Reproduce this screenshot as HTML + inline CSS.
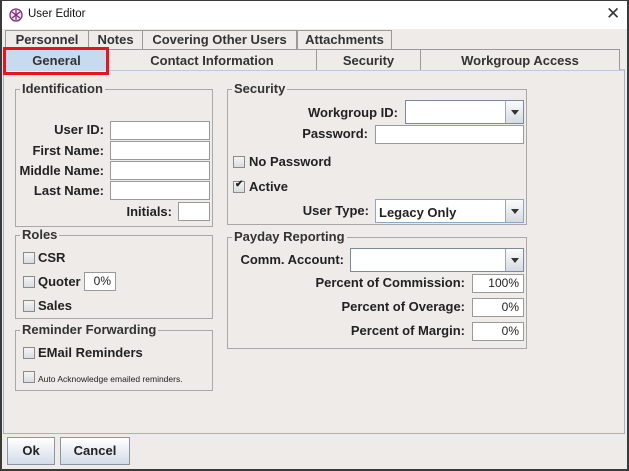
<!DOCTYPE html>
<html><head><style>
*{margin:0;padding:0;box-sizing:border-box}
body{width:629px;height:471px;position:relative;background:#eeebe9;font-family:"Liberation Sans",Arial,sans-serif;font-size:13px;font-weight:bold;color:#222;overflow:hidden}
.a{position:absolute}
.win{left:0;top:0;width:629px;height:471px;border:2px solid #3a3a3a;border-top:1px solid #3a3a3a}
.title{left:1px;top:1px;width:626px;height:28px;background:#fff}
.tab{position:absolute;height:19px;border:1px solid #9a9a9a;border-bottom:none;background:#eeebe9;text-align:center;line-height:18px;font-size:13px;color:#333}
.grp{position:absolute;border:1px solid #a8a8a8}
.grp>span{position:absolute;top:-8px;left:4px;background:#eeebe9;padding:0 2px;font-size:13px;color:#333;line-height:14px}
.lbl{position:absolute;text-align:right;line-height:14px;color:#222}
.fld{position:absolute;background:#fff;border:1px solid #9a9a9a;height:19px;font-weight:normal;text-align:right;padding-right:4px;line-height:17px;font-size:12px}
.cb{position:absolute;width:12px;height:12px;border:1px solid #8a8a8a;background:linear-gradient(#f4f4f4,#d8dce0)}
.cbl{position:absolute;line-height:14px;font-size:13px}
.combo{position:absolute;background:#fff;border:1px solid #7a8a9c;height:24px}
.combo .arr{position:absolute;right:0;top:0;width:18px;height:22px;border-left:1px solid #9aa;background:linear-gradient(#fbfbfb,#d6dbe2)}
.combo .arr:after{content:"";position:absolute;left:5px;top:9px;border-left:4px solid transparent;border-right:4px solid transparent;border-top:5px solid #333}
.btn{position:absolute;top:437px;height:28px;border:1px solid #8a96a6;background:linear-gradient(#ffffff,#d3dce8);text-align:center;line-height:26px;font-size:13px}
</style></head><body>
<div class="a title"></div>
<div class="a win"></div>
<svg class="a" style="left:9px;top:8px" width="14" height="14" viewBox="0 0 14 14"><circle cx="7" cy="7" r="6" fill="#efe3f0" stroke="#7a2a7c" stroke-width="1.3"/><path d="M3 4l8 6M11 4l-8 6M7 2v10" stroke="#7a2a7c" stroke-width="1.2"/></svg>
<div class="a" style="left:28px;top:8px;font-weight:normal;font-size:11.5px;color:#111">User Editor</div>
<div class="a" style="left:606px;top:4px;font-weight:normal;font-size:17px;color:#333">✕</div>

<div class="tab" style="left:5px;top:30px;width:84px">Personnel</div>
<div class="tab" style="left:88px;top:30px;width:55px">Notes</div>
<div class="tab" style="left:142px;top:30px;width:155px">Covering Other Users</div>
<div class="tab" style="left:297px;top:30px;width:95px">Attachments</div>

<div class="a" style="left:3px;top:69px;width:622px;height:365px;border:1px solid #9fb3cc;border-top:2px solid #b8cbe0"></div>
<div class="tab" style="left:5px;top:49px;width:103px;height:22px;background:#c8daf0;line-height:21px">General</div>
<div class="tab" style="left:107px;top:49px;width:210px;height:21px;line-height:21px">Contact Information</div>
<div class="tab" style="left:316px;top:49px;width:105px;height:21px;line-height:21px">Security</div>
<div class="tab" style="left:420px;top:49px;width:200px;height:21px;line-height:21px">Workgroup Access</div>
<div class="a" style="left:3px;top:47px;width:106px;height:28px;border:3px solid #e8141a"></div>

<div class="grp" style="left:15px;top:89px;width:198px;height:138px"><span>Identification</span></div>
<div class="lbl" style="left:6px;top:123px;width:98px">User ID:</div>
<div class="fld" style="left:110px;top:121px;width:100px"></div>
<div class="lbl" style="left:6px;top:144px;width:98px">First Name:</div>
<div class="fld" style="left:110px;top:141px;width:100px"></div>
<div class="lbl" style="left:6px;top:164px;width:98px">Middle Name:</div>
<div class="fld" style="left:110px;top:161px;width:100px"></div>
<div class="lbl" style="left:6px;top:184px;width:98px">Last Name:</div>
<div class="fld" style="left:110px;top:181px;width:100px"></div>
<div class="lbl" style="left:100px;top:205px;width:72px">Initials:</div>
<div class="fld" style="left:178px;top:202px;width:32px"></div>

<div class="grp" style="left:15px;top:235px;width:198px;height:84px"><span>Roles</span></div>
<div class="cb" style="left:23px;top:252px"></div><div class="cbl" style="left:38px;top:251px">CSR</div>
<div class="cb" style="left:23px;top:276px"></div><div class="cbl" style="left:38px;top:275px">Quoter</div>
<div class="fld" style="left:84px;top:272px;width:32px">0%</div>
<div class="cb" style="left:23px;top:300px"></div><div class="cbl" style="left:38px;top:299px">Sales</div>

<div class="grp" style="left:15px;top:330px;width:198px;height:61px"><span>Reminder Forwarding</span></div>
<div class="cb" style="left:23px;top:347px"></div><div class="cbl" style="left:38px;top:346px">EMail Reminders</div>
<div class="cb" style="left:23px;top:371px"></div><div class="cbl" style="left:38px;top:372px;font-size:8.5px;font-weight:normal">Auto Acknowledge emailed reminders.</div>

<div class="grp" style="left:227px;top:89px;width:300px;height:136px"><span>Security</span></div>
<div class="lbl" style="left:250px;top:106px;width:148px">Workgroup ID:</div>
<div class="combo" style="left:405px;top:100px;width:119px"><div class="arr"></div></div>
<div class="lbl" style="left:250px;top:127px;width:118px">Password:</div>
<div class="fld" style="left:375px;top:125px;width:149px"></div>
<div class="cb" style="left:233px;top:156px"></div><div class="cbl" style="left:249px;top:155px">No Password</div>
<div class="cb" style="left:233px;top:181px"></div><div class="a" style="left:235px;top:179px;font-size:10px">✔</div><div class="cbl" style="left:249px;top:180px">Active</div>
<div class="lbl" style="left:250px;top:204px;width:119px">User Type:</div>
<div class="combo" style="left:375px;top:199px;width:149px;border-color:#8aa6c8"><div class="a" style="left:3px;top:5px;font-size:13px">Legacy Only</div><div class="arr"></div></div>

<div class="grp" style="left:227px;top:237px;width:300px;height:112px"><span>Payday Reporting</span></div>
<div class="lbl" style="left:220px;top:253px;width:124px">Comm. Account:</div>
<div class="combo" style="left:350px;top:248px;width:174px"><div class="arr"></div></div>
<div class="lbl" style="left:270px;top:276px;width:195px">Percent of Commission:</div>
<div class="fld" style="left:472px;top:274px;width:52px">100%</div>
<div class="lbl" style="left:270px;top:300px;width:195px">Percent of Overage:</div>
<div class="fld" style="left:472px;top:298px;width:52px">0%</div>
<div class="lbl" style="left:270px;top:324px;width:195px">Percent of Margin:</div>
<div class="fld" style="left:472px;top:322px;width:52px">0%</div>

<div class="btn" style="left:7px;width:48px">Ok</div>
<div class="btn" style="left:60px;width:70px">Cancel</div>
</body></html>
